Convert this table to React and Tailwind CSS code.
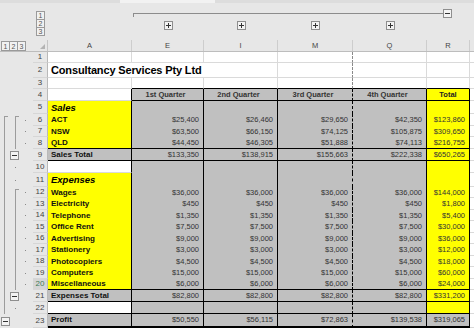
import React from 'react';

const four = (v) => [v, v, v, v];

const DATA = {
  6: ['ACT', ['$25,400', '$26,460', '$29,650', '$42,350'], '$123,860'],
  7: ['NSW', ['$63,500', '$66,150', '$74,125', '$105,875'], '$309,650'],
  8: ['QLD', ['$44,450', '$46,305', '$51,888', '$74,113'], '$216,755'],
  9: ['Sales Total', ['$133,350', '$138,915', '$155,663', '$222,338'], '$650,265'],
  12: ['Wages', four('$36,000'), '$144,000'],
  13: ['Electricity', four('$450'), '$1,800'],
  14: ['Telephone', four('$1,350'), '$5,400'],
  15: ['Office Rent', four('$7,500'), '$30,000'],
  16: ['Advertising', four('$9,000'), '$36,000'],
  17: ['Stationery', four('$3,000'), '$12,000'],
  18: ['Photocopiers', four('$4,500'), '$18,000'],
  19: ['Computers', four('$15,000'), '$60,000'],
  20: ['Miscellaneous', four('$6,000'), '$24,000'],
  21: ['Expenses Total', four('$82,800'), '$331,200'],
  23: ['Profit', ['$50,550', '$56,115', '$72,863', '$139,538'], '$319,065'],
};

const ROWS = [
  { n: 1, h: 'h-[11px]', t: 'blank' },
  { n: 2, h: 'h-[15px]', t: 'title' },
  { n: 3, h: 'h-[11px]', t: 'blank', bb: 'ER' },
  { n: 4, h: 'h-[12px]', t: 'header', bb: 'ER' },
  { n: 5, h: 'h-[13px]', t: 'section', label: 'Sales' },
  { n: 6, h: 'h-[12px]', t: 'item', ol: ['start', 'start', 'dot'] },
  { n: 7, h: 'h-[11px]', t: 'item', ol: ['line', 'line', 'dot'] },
  { n: 8, h: 'h-[12px]', t: 'item', ol: ['line', 'line', 'dot'], bb: 'AR' },
  { n: 9, h: 'h-[12px]', t: 'total', ol: ['line', 'minus', null], bb: 'AR' },
  { n: 10, h: 'h-[12px]', t: 'spacer', ol: ['line', 'dot', null] },
  { n: 11, h: 'h-[14px]', t: 'section', label: 'Expenses', ol: ['line', 'dot', null] },
  { n: 12, h: 'h-[11px]', t: 'item', ol: ['line', 'start', 'dot'] },
  { n: 13, h: 'h-[12px]', t: 'item', ol: ['line', 'line', 'dot'] },
  { n: 14, h: 'h-[11px]', t: 'item', ol: ['line', 'line', 'dot'] },
  { n: 15, h: 'h-[12px]', t: 'item', ol: ['line', 'line', 'dot'] },
  { n: 16, h: 'h-[11px]', t: 'item', ol: ['line', 'line', 'dot'] },
  { n: 17, h: 'h-[12px]', t: 'item', ol: ['line', 'line', 'dot'] },
  { n: 18, h: 'h-[11px]', t: 'item', ol: ['line', 'line', 'dot'] },
  { n: 19, h: 'h-[12px]', t: 'item', ol: ['line', 'line', 'dot'] },
  { n: 20, h: 'h-[11px]', t: 'item', ol: ['line', 'line', 'dot'], bb: 'AR', active: true },
  { n: 21, h: 'h-[12px]', t: 'total', ol: ['line', 'minus', null], bb: 'AR' },
  { n: 22, h: 'h-[12px]', t: 'spacer', ol: ['line', 'dot', null], bb: 'AR' },
  { n: 23, h: 'h-[14px]', t: 'profit', ol: ['minus', null, null], bb: 'thick' },
];

const QCOLS = [
  { w: 'w-[72px]', head: '1st Quarter', key: 'E' },
  { w: 'w-[74px]', head: '2nd Quarter', key: 'I' },
  { w: 'w-[75px]', head: '3rd Quarter', key: 'M' },
  { w: 'w-[74px]', head: '4th Quarter', key: 'Q' },
];

function PlusMinus({ plus }) {
  return (
    <svg width="9" height="9" viewBox="0 0 9 9" className="block shrink-0">
      <rect x="0.5" y="0.5" width="8" height="8" fill="#f3f3f3" stroke="#8e8e8e" />
      <path d="M2 4.5h5" stroke="#333" />
      {plus && <path d="M4.5 2v5" stroke="#333" />}
    </svg>
  );
}

function LevelBtn({ children, className = '' }) {
  return (
    <div
      className={`w-[9px] h-[9px] border border-[#9a9a9a] bg-[#f1f1f1] flex items-center justify-center text-[7px] leading-none text-[#555] ${className}`}
    >
      {children}
    </div>
  );
}

function Lane({ kind, w, level }) {
  return (
    <div className={`${w} h-full flex items-stretch pl-[4px]`}>
      {kind === 'line' && <div className="w-px h-full bg-[#9c9c9c]" />}
      {kind === 'start' && (
        <div className="mt-[2px] w-[4px] border-l border-t border-[#9c9c9c]" />
      )}
      {kind === 'dot' && (
        <div className="h-full flex items-center">
          <div className="w-px h-px bg-[#8a8a8a]" />
        </div>
      )}
      {kind === 'minus' && (
        <div className={`h-full flex items-center ${level === 1 ? '-ml-[3px]' : '-ml-[5px]'}`}>
          <PlusMinus />
        </div>
      )}
    </div>
  );
}

function Outline({ ol }) {
  const o = ol || [null, null, null];
  return (
    <div className="w-[33px] h-full flex shrink-0">
      <Lane kind={o[0]} w="w-[11px]" level={1} />
      <Lane kind={o[1]} w="w-[10px]" level={2} />
      <Lane kind={o[2]} w="w-[12px]" level={3} />
    </div>
  );
}

const NUM = 'text-[7.5px] text-[#333] justify-end pr-[4px]';
const LIGHT_B = 'border-b border-b-[#dadada]';
const LIGHT_R = 'border-r border-r-[#dadada]';

function bottomCls(row, colIsA, isWhite) {
  if (row.bb === 'thick') return 'border-b-2 border-b-black';
  if (row.bb === 'AR') return 'border-b border-b-black';
  if (row.bb === 'ER' && !colIsA) return 'border-b border-b-black';
  if (isWhite) return LIGHT_B;
  return '';
}

function SheetRow({ row }) {
  const { n, t } = row;
  const d = DATA[n];
  const boxed = n >= 4;

  const aWhite = ['blank', 'title', 'header', 'spacer'].includes(t);
  const aBg =
    t === 'section' || t === 'item'
      ? 'bg-[#ffff00]'
      : t === 'total' || t === 'profit'
      ? 'bg-[#c0c0c0]'
      : '';
  const aRight = boxed ? 'border-r border-r-black' : t === 'title' ? '' : LIGHT_R;
  let aContent = null;
  if (t === 'title') {
    aContent = (
      <span className="relative z-10 whitespace-nowrap font-bold text-[11px] tracking-[-0.15px] text-black pl-[3px] pt-[1px]">
        Consultancy Services Pty Ltd
      </span>
    );
  } else if (t === 'section') {
    aContent = (
      <span className="font-bold italic text-[9.5px] text-black pl-[3px] pt-[1px]">{row.label}</span>
    );
  } else if (d) {
    aContent = (
      <span className="font-bold text-[8px] text-[#111] pl-[3px] whitespace-nowrap">{d[0]}</span>
    );
  }

  return (
    <div className={`flex ${row.h}`}>
      <Outline ol={row.ol} />
      <div
        className={`w-[15px] h-full shrink-0 flex items-center justify-center text-[8px] border-r border-r-[#b9b9b9] border-b border-b-[#d6d6d6] ${
          row.active ? 'bg-[#d5d5d5] text-[#3f7a55]' : 'text-[#444]'
        }`}
      >
        {n}
      </div>
      <div className="flex flex-1 h-full bg-white">
        <div className={`w-[84px] h-full shrink-0 flex items-center ${aBg} ${aRight} ${bottomCls(row, true, aWhite)}`}>
          {aContent}
        </div>
        {QCOLS.map((c, i) => {
          const bg = boxed ? 'bg-[#c0c0c0]' : '';
          let right;
          if (c.key === 'M') {
            right = boxed
              ? 'border-r border-r-black [border-right-style:dashed]'
              : 'border-r border-r-[#8a8a8a] [border-right-style:dashed]';
          } else if (t === 'title' && c.key === 'E') {
            right = '';
          } else {
            right = boxed ? 'border-r border-r-black' : LIGHT_R;
          }
          let content = null;
          if (t === 'header') {
            content = (
              <span className="w-full text-center font-bold text-[7.5px] text-[#333] whitespace-nowrap">{c.head}</span>
            );
          } else if (d) {
            content = <span>{d[1][i]}</span>;
          }
          return (
            <div
              key={c.key}
              className={`${c.w} h-full shrink-0 flex items-center ${NUM} ${bg} ${right} ${bottomCls(row, false, !boxed)}`}
            >
              {content}
            </div>
          );
        })}
        <div
          className={`w-[43px] h-full shrink-0 flex items-center ${NUM} ${
            n === 23 ? 'bg-[#c0c0c0]' : boxed ? 'bg-[#ffff00]' : ''
          } ${boxed ? 'border-r border-r-black' : LIGHT_R} ${bottomCls(row, false, !boxed)}`}
        >
          {t === 'header' ? (
            <span className="w-full text-center font-bold text-[7.5px] text-[#222] pl-[4px]">Total</span>
          ) : d ? (
            <span>{d[2]}</span>
          ) : null}
        </div>
        <div className={`flex-1 h-full ${LIGHT_B}`} />
      </div>
    </div>
  );
}

export default function App() {
  return (
    <div className="w-[474px] h-[328px] overflow-hidden bg-[#e7e7e7] font-['Liberation_Sans',Arial,sans-serif] select-none">
      <div className="flex h-[3px]">
        <div className="w-[120px] bg-[#dddddd]" />
        <div className="w-[95px] bg-[#f2f2f2]" />
        <div className="flex-1 bg-[#dddddd]" />
      </div>
      <div className="flex h-[37px]">
        <div className="w-[48px] shrink-0 flex flex-col items-end pr-[3px] pt-[8px]">
          <LevelBtn>1</LevelBtn>
          <LevelBtn className="-mt-px">2</LevelBtn>
          <LevelBtn className="-mt-px">3</LevelBtn>
        </div>
        <div className="flex flex-col flex-1">
          <div className="flex h-[18px] items-start">
            <div className="w-[85px] shrink-0" />
            <div className="w-[310px] shrink-0 mt-[10px] h-[4px] border-l border-t border-[#8c8c8c]" />
            <div className="mt-[6px]">
              <PlusMinus />
            </div>
          </div>
          <div className="flex h-[9px]">
            <div className="w-[84px] shrink-0" />
            {QCOLS.map((c) => (
              <div key={c.key} className={`${c.w} shrink-0 flex justify-center`}>
                <PlusMinus plus />
              </div>
            ))}
          </div>
        </div>
      </div>
      <div className="flex h-[12px] border-b border-b-[#bdbdbd]">
        <div className="w-[33px] shrink-0 flex items-end pl-[1px]">
          <LevelBtn className="h-[10px]">1</LevelBtn>
          <LevelBtn className="h-[10px] -ml-px">2</LevelBtn>
          <LevelBtn className="h-[10px] -ml-px">3</LevelBtn>
        </div>
        <div className="w-[15px] shrink-0 flex items-end justify-end pr-[2px] pb-[2px] border-r border-r-[#c4c4c4]">
          <svg width="5" height="5" viewBox="0 0 5 5" className="block">
            <polygon points="5,0 5,5 0,5" fill="#b3b3b3" />
          </svg>
        </div>
        {[
          ['w-[84px]', 'A'],
          ['w-[72px]', 'E'],
          ['w-[74px]', 'I'],
          ['w-[75px]', 'M'],
          ['w-[74px]', 'Q'],
          ['w-[43px]', 'R'],
        ].map(([w, l]) => (
          <div
            key={l}
            className={`${w} shrink-0 flex items-center justify-center text-[7.5px] text-[#444] border-r border-r-[#cdcdcd]`}
          >
            {l}
          </div>
        ))}
        <div className="flex-1" />
      </div>
      {ROWS.map((r) => (
        <SheetRow key={r.n} row={r} />
      ))}
    </div>
  );
}
